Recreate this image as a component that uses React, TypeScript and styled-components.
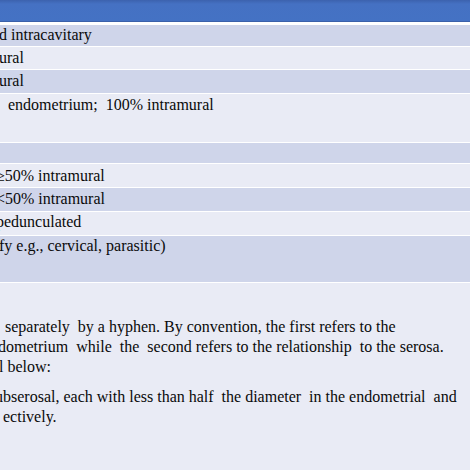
import React from "react";
import styled, { createGlobalStyle } from "styled-components";

const Global = createGlobalStyle`
  html, body { margin: 0; padding: 0; background: #ffffff; }
  body {
    width: 474px;
    height: 474px;
    overflow: hidden;
    font-family: "Liberation Serif", "Times New Roman", serif;
  }
`;

const Page = styled.div`
  width: 470px;
  display: flex;
  flex-direction: column;
  gap: 1px;
  background: #ffffff;
  overflow: hidden;
  font-family: "Liberation Serif", "Times New Roman", serif;
  font-size: 16px;
  color: #0a0a0a;
`;

const Header = styled.div`
  height: 21px;
  margin-bottom: 2px;
  background: linear-gradient(#3c62ae 0px, #4571c3 4px, #4472c4 100%);
  border-bottom: 1px solid #3a60a9;
`;

const Row = styled.div<{ $tone: "dark" | "light"; $h: number; $pt: number }>`
  height: ${(p) => p.$h}px;
  box-sizing: border-box;
  padding-top: ${(p) => p.$pt}px;
  background: ${(p) => (p.$tone === "dark" ? "#cfd5ea" : "#e9ebf5")};
  line-height: 18px;
  white-space: pre;
  overflow: hidden;
`;

const CellText = styled.span<{ $x: number }>`
  display: block;
  margin-left: ${(p) => p.$x}px;
`;

const Notes = styled.div`
  height: 187px;
  box-sizing: border-box;
  padding-top: 34px;
  background: #e9ebf5;
  line-height: 20px;
  white-space: pre;
  overflow: hidden;
`;

const Para = styled.div`
  & + & { margin-top: 10px; }
`;

const Line = styled.div<{ $x: number }>`
  margin-left: ${(p) => p.$x}px;
`;

const rows: { tone: "dark" | "light"; h: number; pt: number; x: number; text: string }[] = [
  { tone: "dark", h: 21, pt: 1, x: -1, text: "d intracavitary" },
  { tone: "light", h: 22, pt: 2, x: -1, text: "ural" },
  { tone: "dark", h: 23, pt: 2, x: -1, text: "ural" },
  { tone: "light", h: 48, pt: 2, x: 8, text: "endometrium;  100% intramural" },
  { tone: "dark", h: 20, pt: 2, x: 0, text: "" },
  { tone: "light", h: 23, pt: 3, x: -4, text: "\u226550% intramural" },
  { tone: "dark", h: 23, pt: 2, x: -4, text: "<50% intramural" },
  { tone: "light", h: 23, pt: 1, x: -4, text: "pedunculated" },
  { tone: "dark", h: 46, pt: 1, x: -1, text: "fy e.g., cervical, parasitic)" },
];

export default function App() {
  return (
    <>
      <Global />
      <Page>
        <Header />
        {rows.map((r, i) => (
          <Row key={i} $tone={r.tone} $h={r.h} $pt={r.pt}>
            <CellText $x={r.x}>{r.text}</CellText>
          </Row>
        ))}
        <Notes>
          <Para>
            <Line $x={5}>separately  by a hyphen. By convention, the first refers to the</Line>
            <Line $x={-2}>dometrium  while  the  second refers to the relationship  to the serosa.</Line>
            <Line $x={-1}>l below:</Line>
          </Para>
          <Para>
            <Line $x={-5}>ubserosal, each with less than half  the diameter  in the endometrial  and</Line>
            <Line $x={3}>ectively.</Line>
          </Para>
        </Notes>
      </Page>
    </>
  );
}
